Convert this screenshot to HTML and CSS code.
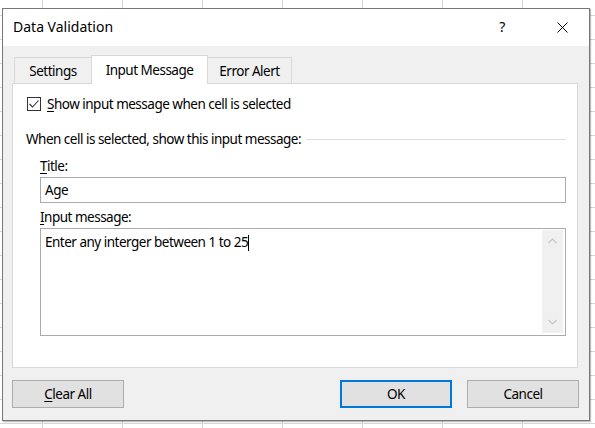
FILE: index.html
```html
<!DOCTYPE html>
<html lang="en">
<head>
  <meta charset="UTF-8" />
  <title>Data Validation</title>
  <link rel="stylesheet" href="styles.css">
</head>
<body>

  <div class="dialog">
    <div class="titlebar">
      <span class="title">Data Validation</span>
      <span class="help">?</span>
      <span class="close">
        <svg width="11" height="11" viewBox="0 0 11 11">
          <path d="M0.5 0.5 L10.5 10.5 M10.5 0.5 L0.5 10.5" stroke="#000" stroke-width="1" fill="none" />
        </svg>
      </span>
    </div>

    <div class="content">
      <div class="tabs">
        <div class="tab">Settings</div>
        <div class="tab active">Input Message</div>
        <div class="tab">Error Alert</div>
      </div>

      <div class="panel">
        <label class="check-row">
          <span class="checkbox">
            <svg width="12" height="12" viewBox="0 0 12 12">
              <path d="M1.5 6 L4.5 9 L10.5 2.5" stroke="#333" stroke-width="1.1" fill="none" />
            </svg>
          </span>
          <span><u>S</u>how input message when cell is selected</span>
        </label>

        <div class="group-head">
          <span>When cell is selected, show this input message:</span>
          <span class="rule"></span>
        </div>

        <div class="fields">
          <div class="field-label"><u>T</u>itle:</div>
          <div class="textbox">Age</div>

          <div class="field-label msg-label"><u>I</u>nput message:</div>
          <div class="textarea">
            <div class="textarea-text">Enter any interger between 1 to 25<span class="caret"></span></div>
            <div class="scrollbar">
              <svg width="9" height="6" viewBox="0 0 9 6">
                <path d="M0.5 5 L4.5 1 L8.5 5" stroke="#c4c4c4" stroke-width="1.2" fill="none" />
              </svg>
              <svg width="9" height="6" viewBox="0 0 9 6">
                <path d="M0.5 1 L4.5 5 L8.5 1" stroke="#c4c4c4" stroke-width="1.2" fill="none" />
              </svg>
            </div>
          </div>
        </div>
      </div>

      <div class="buttons">
        <button class="btn"><u>C</u>lear All</button>
        <div class="btn-group">
          <button class="btn default">OK</button>
          <button class="btn">Cancel</button>
        </div>
      </div>
    </div>
  </div>

</body>
</html>
```

FILE: styles.css
```css
body {
  margin: 0;
  padding: 8px 0 0 2px;
  height: 428px;
  box-sizing: border-box;
  overflow: hidden;
  font-family: "Noto Sans", "Open Sans", sans-serif;
  font-size: 13.5px;
  letter-spacing: -0.5px;
  color: #000;
  background-color: #fff;
  background-image:
    linear-gradient(to right, #d6d6d6 1px, transparent 1px),
    linear-gradient(to bottom, #d6d6d6 1px, transparent 1px);
  background-size: 80px 100%, 100% 24px;
  background-position: 42px 0, 0 15px;
}

.dialog {
  width: 588px;
  height: 413px;
  box-sizing: border-box;
  border: 1px solid #777;
  background-color: #f0f0f0;
  box-shadow: 1px 1px 1px rgba(0,0,0,0.25);
  display: flex;
  flex-direction: column;
}

.titlebar {
  height: 37px;
  background-color: #fff;
  display: flex;
  align-items: center;
  padding: 0 4px 0 10px;
  line-height: 20px;
}

.title {
  flex: 1;
  font-size: 14px;
  letter-spacing: 0;
  margin-top: -1px;
}

.help {
  width: 46px;
  text-align: center;
  font-size: 14px;
  margin-top: -1px;
}

.close {
  width: 46px;
  margin-left: 14px;
  display: flex;
  justify-content: center;
}

.content {
  flex: 1;
  padding: 9px 10px 0 9px;
}

.tabs {
  display: flex;
  align-items: flex-end;
  height: 28px;
  margin-left: 2px;
  line-height: 20px;
}

.tab {
  height: 26px;
  box-sizing: border-box;
  border: 1px solid #d9d9d9;
  border-bottom: none;
  padding-top: 3px;
  text-align: center;
  background-color: #f0f0f0;
}

.tab:nth-child(1) {
  width: 78px;
}

.tab.active {
  width: 117px;
  height: 29px;
  margin-left: -1px;
  margin-bottom: -1px;
  padding-top: 4px;
  background-color: #fff;
  position: relative;
  z-index: 1;
}

.tab:nth-child(3) {
  width: 85px;
  margin-left: -1px;
}

.panel {
  width: 566px;
  height: 285px;
  box-sizing: border-box;
  border: 1px solid #d9d9d9;
  background-color: #fff;
  padding: 13px 11px 0 13px;
  line-height: 20px;
}

.check-row {
  display: flex;
  align-items: center;
  height: 14px;
  gap: 6px;
}

.checkbox {
  width: 14px;
  height: 14px;
  box-sizing: border-box;
  border: 1px solid #333;
  margin-left: 1px;
  display: flex;
  align-items: center;
  justify-content: center;
}

u {
  text-decoration: underline;
  text-underline-offset: 2px;
}

.group-head {
  display: flex;
  align-items: center;
  margin-top: 18px;
  height: 20px;
}

.rule {
  flex: 1;
  height: 1px;
  background-color: #dcdcdc;
  margin-left: 5px;
}

.fields {
  margin-left: 14px;
}

.field-label {
  height: 20px;
  margin-top: 7px;
}

.msg-label {
  margin-top: 4px;
}

.textbox {
  height: 26px;
  box-sizing: border-box;
  border: 1px solid #ababab;
  margin-top: 1px;
  padding: 2px 4px;
}

.textarea {
  height: 108px;
  box-sizing: border-box;
  border: 1px solid #ababab;
  margin-top: 1px;
  display: flex;
}

.textarea-text {
  flex: 1;
  padding: 3px 4px;
}

.caret {
  display: inline-block;
  width: 1px;
  height: 16px;
  background-color: #000;
  vertical-align: -4px;
}

.scrollbar {
  width: 21px;
  margin: 1px 2px 2px 0;
  background-color: #f0f0f0;
  display: flex;
  flex-direction: column;
  align-items: center;
  justify-content: space-between;
  padding: 8px 0;
}

.buttons {
  display: flex;
  justify-content: space-between;
  margin-top: 12px;
}

.btn-group {
  display: flex;
  gap: 15px;
}

.btn {
  width: 112px;
  height: 28px;
  box-sizing: border-box;
  border: 1px solid #adadad;
  background-color: #e1e1e1;
  font-family: inherit;
  font-size: 13.5px;
  letter-spacing: -0.5px;
  color: #000;
  padding: 0;
}

.btn.default {
  border: 2px solid #0078d7;
}
```
